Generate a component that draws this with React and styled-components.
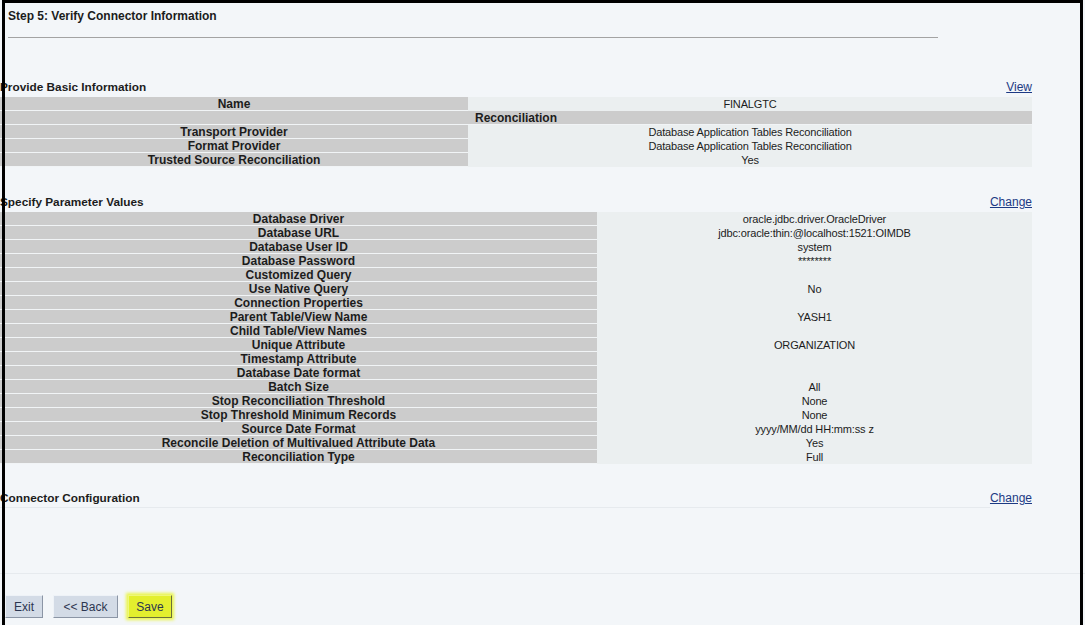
import React from 'react';
import styled, { createGlobalStyle } from 'styled-components';

const GlobalStyle = createGlobalStyle`
  html, body {
    margin: 0;
    padding: 0;
    background: #f3f6f9;
  }
  body {
    font-family: Tahoma, "Liberation Sans", Arial, sans-serif;
    color: #1c1c1c;
  }
`;

const Page = styled.div`
  position: relative;
  width: 1085px;
  height: 625px;
  overflow: hidden;
  background: #f3f6f9;
  display: flex;
  flex-direction: column;
`;

// black annotation frame drawn over the screenshot
const Frame = styled.div`
  position: absolute;
  top: 0;
  left: 2px;
  right: 2px;
  bottom: -10px;
  border: 3px solid #000;
  pointer-events: none;
`;

const Title = styled.div`
  margin: 9px 0 0 8px;
  height: 14px;
  line-height: 14px;
  font-size: 12px;
  font-weight: bold;
`;

const Rule = styled.div`
  margin: 14px 0 0 8px;
  width: 930px;
  height: 1px;
  background: #a3a3a3;
`;

const SectionHead = styled.div`
  display: flex;
  align-items: center;
  width: 1032px;
  height: 20px;
  margin-top: ${p => p.gap}px;
`;

const SectionTitle = styled.div`
  flex: 1;
  align-self: stretch;
  display: flex;
  align-items: center;
  font-size: 11.8px;
  font-weight: bold;
  border-bottom: 1px solid ${p => (p.underline ? '#e6eaee' : 'transparent')};
`;

const Link = styled.a`
  font-size: 12px;
  color: #1d3a84;
  text-decoration: underline;
  cursor: pointer;
`;

const Table = styled.div`
  display: grid;
  grid-template-columns: ${p => p.labelWidth}px 1fr;
  width: 1032px;
`;

const Label = styled.div`
  height: 12px;
  padding-top: 1px;
  line-height: 13px;
  background: #cccccc;
  border-bottom: 1px solid #f1f4f6;
  text-align: center;
  font-size: 12px;
  font-weight: bold;
  white-space: nowrap;
`;

const Value = styled.div`
  height: 13px;
  padding-top: 1px;
  line-height: 13px;
  background: #ebeff0;
  text-align: center;
  font-size: 11px;
  letter-spacing: -0.15px;
  white-space: nowrap;
`;

const SpanRow = styled(Label)`
  grid-column: 1 / -1;
`;

const Spacer = styled.div`
  flex: 1;
`;

const Footer = styled.div`
  height: 52px;
  border-top: 1px solid #e6eaee;
  display: flex;
  align-items: flex-start;
  gap: 10px;
  padding: 21px 0 0 5px;
  box-sizing: border-box;
`;

const Button = styled.button`
  height: 23px;
  width: ${p => p.w}px;
  padding: 0;
  font-family: Tahoma, "Liberation Sans", Arial, sans-serif;
  font-size: 12px;
  color: #2c3650;
  background: ${p => (p.marked ? '#e3ef2e' : '#d3dbe6')};
  border: 1px solid;
  border-color: ${p => (p.marked ? '#eef77a #6a6f3a #6a6f3a #eef77a' : '#eef2f7 #8b95a5 #8b95a5 #eef2f7')};
  box-shadow: ${p => (p.marked ? '0 0 3px 2px #eaf54a' : 'none')};
  cursor: pointer;
`;

const basicRows = [
  ['Transport Provider', 'Database Application Tables Reconciliation'],
  ['Format Provider', 'Database Application Tables Reconciliation'],
  ['Trusted Source Reconciliation', 'Yes'],
];

const paramRows = [
  ['Database Driver', 'oracle.jdbc.driver.OracleDriver'],
  ['Database URL', 'jdbc:oracle:thin:@localhost:1521:OIMDB'],
  ['Database User ID', 'system'],
  ['Database Password', '********'],
  ['Customized Query', ''],
  ['Use Native Query', 'No'],
  ['Connection Properties', ''],
  ['Parent Table/View Name', 'YASH1'],
  ['Child Table/View Names', ''],
  ['Unique Attribute', 'ORGANIZATION'],
  ['Timestamp Attribute', ''],
  ['Database Date format', ''],
  ['Batch Size', 'All'],
  ['Stop Reconciliation Threshold', 'None'],
  ['Stop Threshold Minimum Records', 'None'],
  ['Source Date Format', 'yyyy/MM/dd HH:mm:ss z'],
  ['Reconcile Deletion of Multivalued Attribute Data', 'Yes'],
  ['Reconciliation Type', 'Full'],
];

const Rows = ({ rows }) =>
  rows.map(([label, value]) => (
    <React.Fragment key={label}>
      <Label>{label}</Label>
      <Value>{value}</Value>
    </React.Fragment>
  ));

const App = () => (
  <Page>
    <GlobalStyle />
    <Title>Step 5: Verify Connector Information</Title>
    <Rule />

    <SectionHead gap={39}>
      <SectionTitle>Provide Basic Information</SectionTitle>
      <Link>View</Link>
    </SectionHead>
    <Table labelWidth={468}>
      <Label>Name</Label>
      <Value>FINALGTC</Value>
      <SpanRow>Reconciliation</SpanRow>
      <Rows rows={basicRows} />
    </Table>

    <SectionHead gap={25}>
      <SectionTitle>Specify Parameter Values</SectionTitle>
      <Link>Change</Link>
    </SectionHead>
    <Table labelWidth={597}>
      <Rows rows={paramRows} />
    </Table>

    <SectionHead gap={24}>
      <SectionTitle underline>Connector Configuration</SectionTitle>
      <Link>Change</Link>
    </SectionHead>

    <Spacer />
    <Footer>
      <Button w={38}>Exit</Button>
      <Button w={65}>&lt;&lt; Back</Button>
      <Button w={44} marked>Save</Button>
    </Footer>

    <Frame />
  </Page>
);

export default App;
